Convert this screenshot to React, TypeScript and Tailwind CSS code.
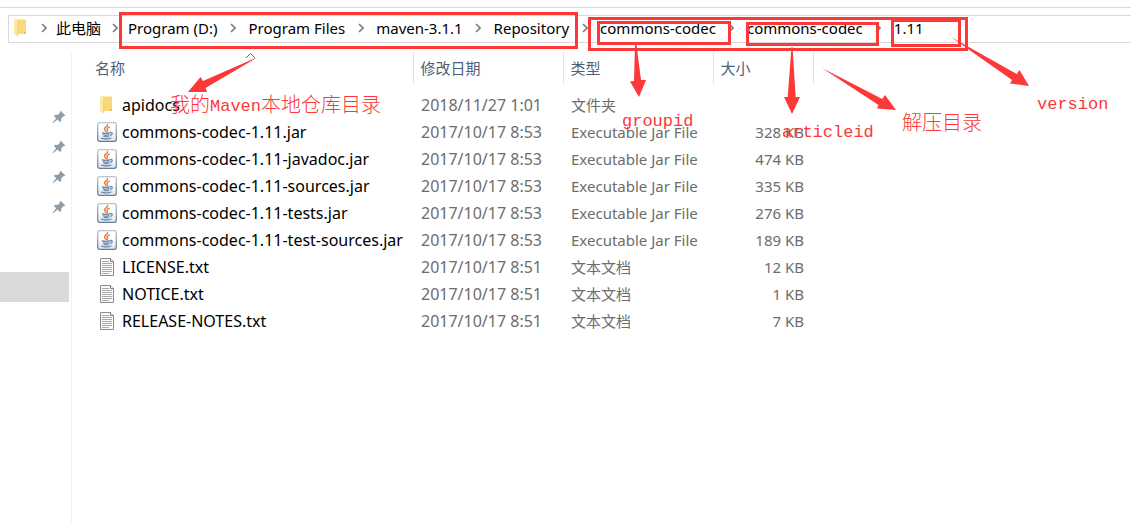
import { Fragment } from "react";
import type { ReactNode } from "react";

type FileKind = "folder" | "jar" | "text";

type FileRow = {
    name: string;
    kind: FileKind;
    modified: string;
    type: string;
    size: string;
};

const crumbs = [
    "Program (D:)",
    "Program Files",
    "maven-3.1.1",
    "Repository",
    "commons-codec",
    "commons-codec",
    "1.11",
];

const columns = ["名称", "修改日期", "类型", "大小"];

const files: FileRow[] = [
    { name: "apidocs", kind: "folder", modified: "2018/11/27 1:01", type: "文件夹", size: "" },
    { name: "commons-codec-1.11.jar", kind: "jar", modified: "2017/10/17 8:53", type: "Executable Jar File", size: "328 KB" },
    { name: "commons-codec-1.11-javadoc.jar", kind: "jar", modified: "2017/10/17 8:53", type: "Executable Jar File", size: "474 KB" },
    { name: "commons-codec-1.11-sources.jar", kind: "jar", modified: "2017/10/17 8:53", type: "Executable Jar File", size: "335 KB" },
    { name: "commons-codec-1.11-tests.jar", kind: "jar", modified: "2017/10/17 8:53", type: "Executable Jar File", size: "276 KB" },
    { name: "commons-codec-1.11-test-sources.jar", kind: "jar", modified: "2017/10/17 8:53", type: "Executable Jar File", size: "189 KB" },
    { name: "LICENSE.txt", kind: "text", modified: "2017/10/17 8:51", type: "文本文档", size: "12 KB" },
    { name: "NOTICE.txt", kind: "text", modified: "2017/10/17 8:51", type: "文本文档", size: "1 KB" },
    { name: "RELEASE-NOTES.txt", kind: "text", modified: "2017/10/17 8:51", type: "文本文档", size: "7 KB" },
];

function FolderIcon() {
    return (
        <svg width="20" height="20" viewBox="0 0 20 20" aria-hidden="true">
            <path d="M4 1.500h11v14.500H6z" fill="#f9d978" />
            <path d="M13 14h2v2h-2z" fill="#eec04f" />
            <path d="M3 1.500h1.500L7 3.5V18.500L3 16z" fill="#fde9a6" />
            <path d="M6.700 3.5V18" stroke="#efca66" strokeWidth="0.8" />
        </svg>
    );
}

function JarIcon() {
    return (
        <svg width="20" height="20" viewBox="0 0 20 20" aria-hidden="true">
            <defs>
                <linearGradient id="jarFrame" x1="0" y1="0" x2="0" y2="1">
                    <stop offset="0" stopColor="#b9c6d2" />
                    <stop offset="1" stopColor="#647e98" />
                </linearGradient>
                <linearGradient id="jarFace" x1="0" y1="0" x2="0" y2="1">
                    <stop offset="0.4" stopColor="#ffffff" />
                    <stop offset="1" stopColor="#dfe3e7" />
                </linearGradient>
            </defs>
            <rect x="0.7" y="0.7" width="18.6" height="18.6" rx="2" fill="url(#jarFace)" stroke="url(#jarFrame)" strokeWidth="1.3" />
            <g fill="none" stroke="#ea7e35" strokeWidth="1.4" strokeLinecap="round">
                <path d="M10.500 2.500c.8 2-3.400 2.700-3 4.700.2 1 1.400 1.300 1.500 2.500" />
                <path d="M12.300 5.200c-1.500.6-2.700 1.300-2.100 2.500.5.8.6 1.200-.2 2" />
            </g>
            <g fill="none" stroke="#6e8fae" strokeWidth="1.4" strokeLinecap="round">
                <path d="M5.500 10.800c1.500.7 5.500.7 7.200 0" />
                <path d="M6.300 12.700c1.500.6 4 .6 5.500 0" />
                <path d="M7 14.400c1.300.5 3.200.5 4.500 0" />
                <path d="M4.500 16.200c2.500 1 7.500 1 9.500-.2" />
                <path d="M13.600 10.500c2.500-.2 1.800 2.200-.3 2.800" />
            </g>
        </svg>
    );
}

function TextIcon() {
    return (
        <svg width="20" height="20" viewBox="0 0 20 20" aria-hidden="true">
            <path d="M3.500 1.500h10l3 3v14h-13z" fill="#fafafa" stroke="#8c8c8c" />
            <path d="M13.500 1.500v3h3" fill="#fff" stroke="#777" />
            <path d="M5 4.500h7M5 6.500h10M5 8.500h10M5 10.500h10M5 12.500h10M5 14.500h10M5 16.500h7" stroke="#a9a9a9" />
        </svg>
    );
}

const kindIcons: Record<FileKind, ReactNode> = {
    folder: <FolderIcon />,
    jar: <JarIcon />,
    text: <TextIcon />,
};

function PinIcon() {
    return (
        <svg width="14" height="14" viewBox="0 0 14 14" aria-hidden="true">
            <path d="M8.500.8l4.800 4.600-1.300.9-.8-.1-2 2.200.1 2.400-1.300 1.100-2.400-2.300L1 13.300l-.4-.5 3.600-4.600L1.900 6l1.200-1.200 2.500.2 2.300-2-.1-1z" fill="#8f9ba5" />
        </svg>
    );
}

function Chevron() {
    return (
        <svg width="6" height="10" viewBox="0 0 6 10" className="shrink-0" aria-hidden="true">
            <path d="M1 1l4 4-4 4" fill="none" stroke="#7c7c7c" strokeWidth="1.6" />
        </svg>
    );
}

function AddressBar() {
    return (
        <nav aria-label="Address" className="mt-[7px] ml-2 flex h-7 items-center border-y border-l border-[#d9d9d9] pb-[2px] pl-[2px] whitespace-nowrap text-black">
            <FolderIcon />
            <span className="flex w-[25px] shrink-0 justify-center"><Chevron /></span>
            <button type="button" className="shrink-0">此电脑</button>
            {crumbs.map((crumb, i) => (
                <Fragment key={i}>
                    <span className={i === 0 ? "flex w-[27px] shrink-0 justify-center" : "flex w-[31px] shrink-0 justify-center"}>
                        <Chevron />
                    </span>
                    <button type="button" className="shrink-0">{crumb}</button>
                </Fragment>
            ))}
        </nav>
    );
}

function Sidebar() {
    return (
        <aside className="flex w-[72px] shrink-0 flex-col border-r border-[#f3f3f3] pt-[50px]">
            {[0, 1, 2, 3].map((n) => (
                <div key={n} className="flex h-[30px] items-center justify-end pr-[5px]">
                    <PinIcon />
                </div>
            ))}
            <div className="mt-[50px] mr-[2px] h-[30px] bg-[#d9d9d9]" />
        </aside>
    );
}

function FileTable() {
    return (
        <table className="w-full table-fixed border-collapse text-left">
            <colgroup>
                <col className="w-[341px]" />
                <col className="w-[150px]" />
                <col className="w-[150px]" />
                <col className="w-[100px]" />
                <col />
            </colgroup>
            <thead>
                <tr className="h-8 text-[#4c607a]">
                    {columns.map((column, i) => (
                        <th key={column} scope="col" className={i === 0 ? "border-r border-[#e2e2e2] pl-[23px] font-normal" : "border-r border-[#e2e2e2] pl-[7px] font-normal"}>
                            <button type="button">{column}</button>
                        </th>
                    ))}
                    <td />
                </tr>
                <tr className="h-[7px]" />
            </thead>
            <tbody>
                {files.map((file) => (
                    <tr key={file.name} className="h-[27px] text-[#6d6d6d]">
                        <td className="pl-[25px]">
                            <div className="flex items-center gap-[5px] text-base leading-5 whitespace-nowrap text-black">
                                {kindIcons[file.kind]}
                                {file.name}
                            </div>
                        </td>
                        <td className="pl-2 text-base leading-5 whitespace-nowrap">{file.modified}</td>
                        <td className="pl-2 whitespace-nowrap">{file.type}</td>
                        <td className="pr-[9px] text-right whitespace-nowrap">{file.size}</td>
                        <td />
                    </tr>
                ))}
            </tbody>
        </table>
    );
}

// Red marker layer drawn over the explorer window
function Annotations() {
    return (
        <div className="pointer-events-none absolute inset-0 overflow-hidden font-['Liberation_Mono','Noto_Sans_CJK_SC',monospace] text-[17px] leading-6 whitespace-nowrap text-[#fc3838]">
            <svg width="1131" height="130" viewBox="0 0 1131 130" className="absolute top-0 left-0" aria-hidden="true">
                <path d="M246 58l4.500-4.500L255 58" fill="none" stroke="#666" />
                <g fill="none" stroke="#fc3838" strokeWidth="3">
                    <rect x="120.500" y="13.500" width="456" height="34" />
                    <rect x="589.500" y="18.500" width="377" height="31" />
                    <rect x="598.500" y="22.500" width="131" height="21" />
                    <rect x="747.500" y="23.500" width="130" height="21" />
                    <rect x="892.500" y="20.500" width="67" height="25" />
                </g>
                <g fill="#fc3838">
                    <path d="M258 57L203 81 200.500 77 188 92 207 92 205.500 88z" />
                    <path d="M635 45h1.500L641 80l5 0L639 97 630 81.500l4-.5z" />
                    <path d="M791.500 47h1l3.200 50h4.300L792 114 784 97h3.700z" />
                    <path d="M822 68L882.300 99 885 95 896 110 877 108.500 878.500 105z" />
                    <path d="M951 37L1016.700 74 1019.500 70 1029 86 1010 83.500 1012 80z" />
                </g>
            </svg>
            <span className="absolute top-[95px] left-[170px] flex">
                <span className="text-[20px] font-light">我的</span>Maven<span className="text-[20px] font-light">本地仓库目录</span>
            </span>
            <span className="absolute top-[110px] left-[622px]">groupid</span>
            <span className="absolute top-[121px] left-[782px]">articleid</span>
            <span className="absolute top-[113px] left-[902px] text-[20px] font-light">解压目录</span>
            <span className="absolute top-[93px] left-[1037px]">version</span>
        </div>
    );
}

export default function App() {
    return (
        <div className="relative flex min-h-screen flex-col overflow-hidden bg-white font-['Noto_Sans','Noto_Sans_CJK_SC',sans-serif] text-[15px] leading-5">
            <div className="h-2 border-b border-[#d9d9d9]" />
            <AddressBar />
            <main className="mt-[9px] flex flex-1">
                <Sidebar />
                <div className="min-w-0 flex-1">
                    <FileTable />
                </div>
            </main>
            <Annotations />
        </div>
    );
}
